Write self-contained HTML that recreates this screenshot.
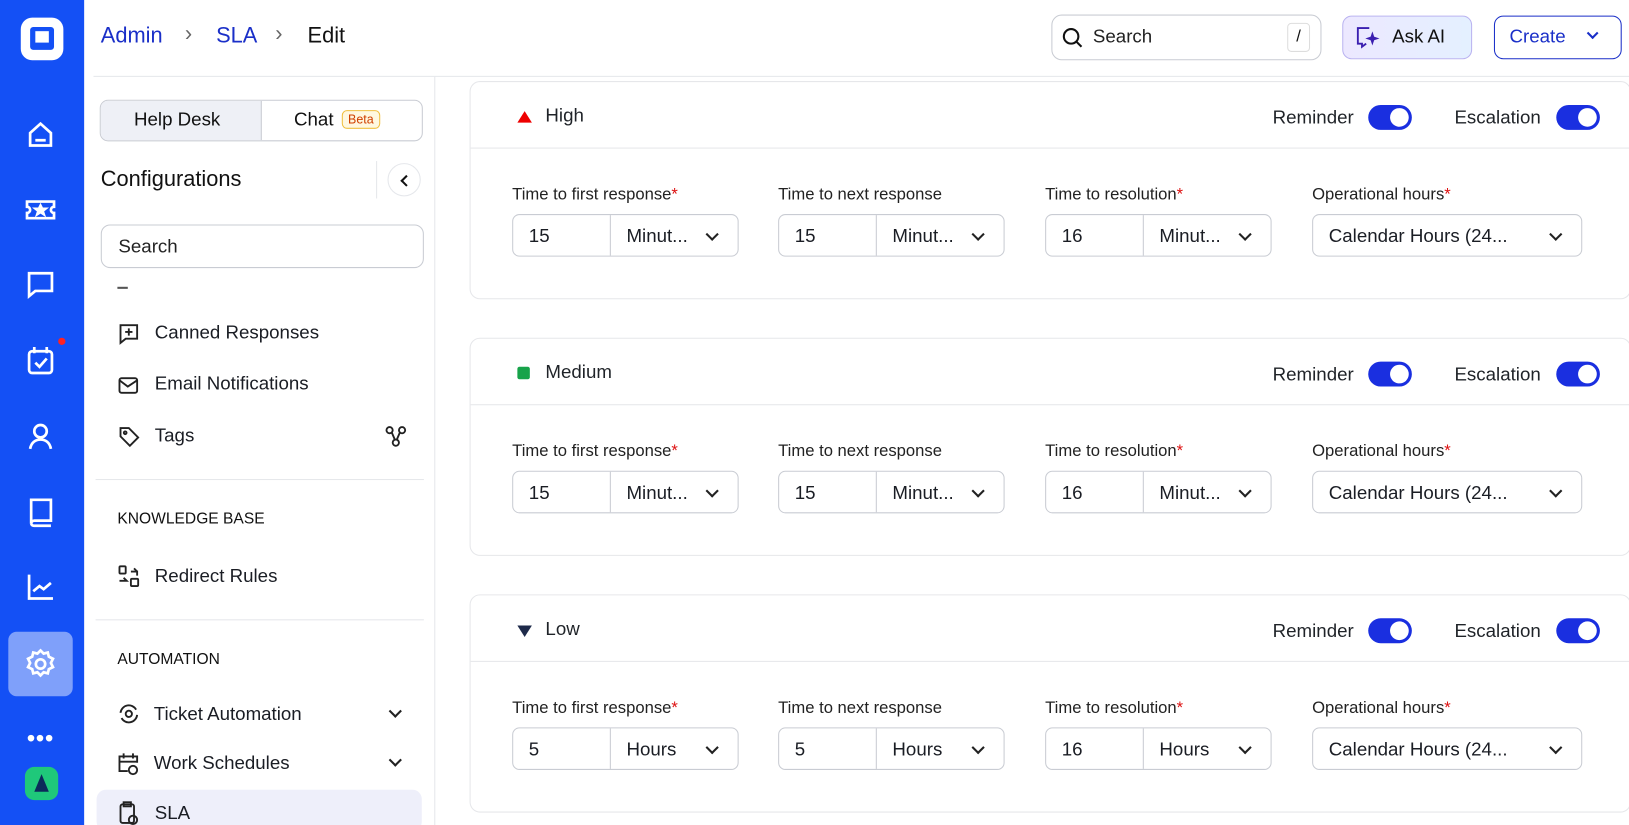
<!DOCTYPE html>
<html><head><meta charset="utf-8"><style>
*{box-sizing:border-box;margin:0;padding:0}
html,body{width:1629px;height:825px;overflow:hidden;background:#fff;font-family:"Liberation Sans",sans-serif;color:#111}
#w{width:1568px;height:794px;transform:scale(1.0389,1.0391);transform-origin:0 0;position:relative;background:#fff}
.a{position:absolute}
.rail{left:0;top:0;width:81px;height:794px;background:#1450f5}
.ic{position:absolute;left:22px;width:34px;height:34px}
.sep{background:#e5e7eb;height:1px}
.card{position:absolute;left:452px;width:1118px;height:210px;border:1px solid #e6e7ea;border-radius:10px;background:#fff}
.card .hd{height:64px;border-bottom:1px solid #e6e7ea;position:relative}
.t{font-size:18px;color:#1f2328}
.lbl{position:absolute;top:100px;font-size:16px;color:#222}
.lbl b{color:#d11;font-weight:normal}
.inp{position:absolute;top:127px;height:41px;border:1px solid #c9ccd3;border-radius:7px;font-size:18px;color:#1a1d24}
.inp .n{position:absolute;left:15px;top:10px}
.inp .d{position:absolute;left:93px;top:0;width:1px;height:39px;background:#c9ccd3}
.inp .u{position:absolute;left:109px;top:10px}
.inp .c{position:absolute;right:20px;top:7px}
.tg{position:absolute;width:42px;height:24px;border-radius:12px;background:#1a2fe0}
.tg:after{content:"";position:absolute;right:3px;top:3px;width:18px;height:18px;border-radius:50%;background:#fff}
.chev{display:inline-block;width:9px;height:9px;border-right:2px solid #222;border-bottom:2px solid #222;transform:rotate(45deg);margin-top:-5px}
.ch2{position:absolute;width:9px;height:9px;border-right:2px solid #222;border-bottom:2px solid #222;transform:rotate(45deg)}
.nav{position:absolute;left:148px;font-size:18px;color:#1a1d24}
</style></head><body><div id="w">
<div class="a rail"></div>
<div class="a" style="left:20px;top:17px;width:41px;height:41px;border-radius:11px;background:#fff"><div style="position:absolute;left:9px;top:9px;width:23px;height:22px;background:#1450f5;border-radius:3px"></div><div style="position:absolute;left:14px;top:13px;width:13px;height:11px;background:#fff"></div></div>
<svg class="ic" style="top:113px" viewBox="0 0 34 34" fill="none" stroke="#fff" stroke-width="2.6"><path d="M7 15 L17 6 L27 15 V27 H7 Z"/><path d="M12 22h10"/></svg>
<svg class="ic" style="top:185px" viewBox="0 0 34 34" fill="none" stroke="#fff" stroke-width="2.6"><path d="M4 9h26v5a3 3 0 0 0 0 6v5H4v-5a3 3 0 0 0 0-6z"/><path d="M17 13l1.5 3h3l-2.5 2 1 3-3-2-3 2 1-3-2.5-2h3z" fill="#fff"/></svg>
<svg class="ic" style="top:257px" viewBox="0 0 34 34" fill="none" stroke="#fff" stroke-width="2.6"><path d="M6 6h22v17H12l-6 5z"/></svg>
<svg class="ic" style="top:330px" viewBox="0 0 34 34" fill="none" stroke="#fff" stroke-width="2.6"><rect x="6" y="8" width="22" height="21" rx="3"/><path d="M11 4v6M23 4v6M12 19l4 4 7-8"/></svg>
<div class="a" style="left:54px;top:323px;width:11px;height:11px;border-radius:50%;background:#f22;border:2px solid #1450f5"></div>
<svg class="ic" style="top:403px" viewBox="0 0 34 34" fill="none" stroke="#fff" stroke-width="2.6"><circle cx="17" cy="12" r="6"/><path d="M7 29c1-6 5-9 10-9s9 3 10 9"/></svg>
<svg class="ic" style="top:476px" viewBox="0 0 34 34" fill="none" stroke="#fff" stroke-width="2.6"><path d="M8 5h19v20H11a3 3 0 0 0-3 3zM8 28a3 3 0 0 0 3 2h16"/></svg>
<svg class="ic" style="top:548px" viewBox="0 0 34 34" fill="none" stroke="#fff" stroke-width="2.6"><path d="M6 5v23h23M10 21l6-5 4 3 7-6"/></svg>
<div class="a" style="left:8px;top:608px;width:62px;height:62px;border-radius:8px;background:#7fa0fa"></div>
<svg class="ic" style="top:622px" viewBox="0 0 34 34" fill="none" stroke="#fff" stroke-width="2.6"><circle cx="17" cy="17" r="4.5"/><path d="M17 4l3 3 4-1 1 4 4 2-2 4 2 4-4 2-1 4-4-1-3 3-3-3-4 1-1-4-4-2 2-4-2-4 4-2 1-4 4 1z"/></svg>
<div class="a" style="left:26px;top:698px;color:#fff;font-size:22px;font-weight:bold;letter-spacing:1px">•••</div>
<div class="a" style="left:24px;top:738px;width:32px;height:32px;border-radius:9px;background:#1fc87a"><div style="position:absolute;left:9px;top:7px;width:0;height:0;border-left:7px solid transparent;border-right:7px solid transparent;border-bottom:17px solid #0c2a5a"></div></div>

<div class="a" style="left:97px;top:23px;font-size:21px;color:#1a2fc8">Admin</div>
<div class="a" style="left:178px;top:21px;font-size:21px;color:#666">›</div>
<div class="a" style="left:208px;top:23px;font-size:21px;color:#1a2fc8">SLA</div>
<div class="a" style="left:265px;top:21px;font-size:21px;color:#666">›</div>
<div class="a" style="left:296px;top:23px;font-size:21px;color:#111">Edit</div>
<div class="a" style="left:1012px;top:14px;width:260px;height:44px;border:1px solid #c9ccd3;border-radius:10px"></div>
<svg class="a" style="left:1020px;top:24px" width="24" height="24" viewBox="0 0 24 24" fill="none" stroke="#111" stroke-width="2"><circle cx="11" cy="11" r="7"/><path d="M16 16l5 5"/></svg>
<div class="a" style="left:1052px;top:25px;font-size:18px;color:#222">Search</div>
<div class="a" style="left:1239px;top:22px;width:22px;height:28px;border:1px solid #ddd;border-radius:4px;font-size:16px;text-align:center;line-height:26px">/</div>
<div class="a" style="left:1292px;top:15px;width:125px;height:42px;border:1px solid #b9b2f0;border-radius:9px;background:linear-gradient(90deg,#ece8ff,#e4f0ff)"></div>
<svg class="a" style="left:1304px;top:24px" width="24" height="24" viewBox="0 0 24 24" fill="none" stroke="#3b1fb0" stroke-width="1.8"><path d="M14 3H3v15h4v3l4-3"/><path d="M17 9l1 3 3 1-3 1-1 3-1-3-3-1 3-1z" fill="#3b1fb0"/></svg>
<div class="a" style="left:1340px;top:25px;font-size:18px;color:#111">Ask AI</div>
<div class="a" style="left:1438px;top:15px;width:123px;height:42px;border:1.5px solid #1a2fc8;border-radius:9px"></div>
<div class="a" style="left:1453px;top:25px;font-size:18px;color:#1a2fc8">Create</div>
<div class="ch2" style="left:1529px;top:28px;width:8px;height:8px;border-color:#1a2fc8"></div>
<div class="a sep" style="left:90px;top:73px;width:1478px"></div>
<div class="a" style="left:418px;top:74px;width:1px;height:720px;background:#e5e7eb"></div>

<div class="a" style="left:96px;top:96px;width:311px;height:40px;border:1px solid #c9ccd3;border-radius:8px;overflow:hidden"><div style="width:155px;height:100%;background:#eef0f6;border-right:1px solid #c9ccd3"></div></div>
<div class="a" style="left:129px;top:105px;font-size:18px">Help Desk</div>
<div class="a" style="left:283px;top:105px;font-size:18px">Chat</div>
<div class="a" style="left:329px;top:106px;padding:1px 5px;border:1px solid #f0c040;border-radius:5px;background:#fff8e0;color:#d04000;font-size:12px">Beta</div>
<div class="a" style="left:97px;top:161px;font-size:21px">Configurations</div>
<div class="a" style="left:362px;top:155px;width:1px;height:36px;background:#e5e7eb"></div>
<div class="a" style="left:373px;top:157px;width:32px;height:32px;border:1px solid #e5e7eb;border-radius:50%"><span class="a chev" style="left:13px;top:12px;transform:rotate(135deg);margin:0;border-width:2.5px;width:8px;height:8px;border-color:#111"></span></div>
<div class="a" style="left:97px;top:216px;width:311px;height:42px;border:1px solid #c9ccd3;border-radius:9px"></div>
<div class="a" style="left:114px;top:227px;font-size:18px;color:#222">Search</div>
<div class="a" style="left:113px;top:276px;width:10px;height:2px;background:#555"></div>
<svg class="a" style="left:113px;top:310px" width="22" height="22" viewBox="0 0 22 22" fill="none" stroke="#222" stroke-width="1.8"><path d="M3 3h16v13H8l-5 4z"/><path d="M11 6v7M7.5 9.5h7"/></svg>
<div class="nav" style="left:149px;top:310px">Canned Responses</div>
<svg class="a" style="left:113px;top:360px" width="22" height="22" viewBox="0 0 22 22" fill="none" stroke="#222" stroke-width="1.8"><rect x="2" y="4" width="17" height="14" rx="2"/><path d="M2 6l8 6 9-6"/></svg>
<div class="nav" style="left:149px;top:359px">Email Notifications</div>
<svg class="a" style="left:113px;top:409px" width="22" height="22" viewBox="0 0 22 22" fill="none" stroke="#222" stroke-width="1.8"><path d="M3 3h8l9 9-8 8-9-9z"/><circle cx="7.5" cy="7.5" r="1.3"/></svg>
<div class="nav" style="left:149px;top:409px">Tags</div>
<svg class="a" style="left:370px;top:409px" width="22" height="22" viewBox="0 0 22 22" fill="none" stroke="#222" stroke-width="1.8"><circle cx="5" cy="5" r="3"/><circle cx="17" cy="5" r="3"/><circle cx="11" cy="17" r="3"/><path d="M7 7l3 7M15 7l-3 7"/></svg>
<div class="a sep" style="left:92px;top:461px;width:316px"></div>
<div class="a" style="left:113px;top:491px;font-size:15px;color:#111">KNOWLEDGE BASE</div>
<svg class="a" style="left:113px;top:543px" width="22" height="24" viewBox="0 0 22 24" fill="none" stroke="#222" stroke-width="1.8"><rect x="2" y="2" width="6" height="7" rx="1"/><rect x="13" y="14" width="7" height="7" rx="1"/><path d="M13 7h6v4M16 4l3 3M2 16h7l-3-3"/></svg>
<div class="nav" style="left:149px;top:544px">Redirect Rules</div>
<div class="a sep" style="left:92px;top:596px;width:316px"></div>
<div class="a" style="left:113px;top:626px;font-size:15px;color:#111">AUTOMATION</div>
<svg class="a" style="left:113px;top:676px" width="22" height="22" viewBox="0 0 22 22" fill="none" stroke="#222" stroke-width="1.8"><path d="M3 10a8 8 0 0 1 15-3M19 12a8 8 0 0 1-15 3"/><circle cx="11" cy="11" r="3"/></svg>
<div class="nav" style="left:148px;top:677px">Ticket Automation</div>
<div class="ch2" style="left:376px;top:680px"></div>
<svg class="a" style="left:113px;top:723px" width="22" height="24" viewBox="0 0 22 24" fill="none" stroke="#222" stroke-width="1.8"><path d="M10 19H2V5h17v6M2 10h17M6 2v5M15 2v5"/><circle cx="15" cy="18" r="4"/></svg>
<div class="nav" style="left:148px;top:724px">Work Schedules</div>
<div class="ch2" style="left:376px;top:727px"></div>
<div class="a" style="left:93px;top:760px;width:313px;height:40px;border-radius:9px;background:#eeeffa"></div>
<svg class="a" style="left:113px;top:771px" width="22" height="24" viewBox="0 0 22 24" fill="none" stroke="#222" stroke-width="1.8"><rect x="3" y="3" width="13" height="18" rx="2"/><rect x="6" y="1" width="7" height="4"/><circle cx="15" cy="18" r="4"/></svg>
<div class="nav" style="left:149px;top:772px">SLA</div>

<!-- cards -->
<div class="card" style="top:78px"><div class="hd">
<div class="a" style="left:45px;top:28px;width:0;height:0;border-left:7px solid transparent;border-right:7px solid transparent;border-bottom:11px solid #e00"></div>
<div class="a t" style="left:72px;top:22px">High</div>
<div class="a t" style="left:772px;top:24px">Reminder</div><div class="tg" style="left:864px;top:22px"></div>
<div class="a t" style="left:947px;top:24px">Escalation</div><div class="tg" style="left:1045px;top:22px"></div></div>
<div class="lbl" style="left:40px">Time to first response<b>*</b></div>
<div class="lbl" style="left:296px">Time to next response</div>
<div class="lbl" style="left:553px">Time to resolution<b>*</b></div>
<div class="lbl" style="left:810px">Operational hours<b>*</b></div>
<div class="inp" style="left:40px;width:218px"><span class="n">15</span><span class="d"></span><span class="u">Minut...</span><span class="c"><span class="chev"></span></span></div>
<div class="inp" style="left:296px;width:218px"><span class="n">15</span><span class="d"></span><span class="u">Minut...</span><span class="c"><span class="chev"></span></span></div>
<div class="inp" style="left:553px;width:218px"><span class="n">16</span><span class="d"></span><span class="u">Minut...</span><span class="c"><span class="chev"></span></span></div>
<div class="inp" style="left:810px;width:260px"><span class="n">Calendar Hours (24...</span><span class="c"><span class="chev"></span></span></div>
</div>
<div class="card" style="top:325px"><div class="hd">
<div class="a" style="left:45px;top:27px;width:12px;height:12px;border-radius:2px;background:#17a34a"></div>
<div class="a t" style="left:72px;top:22px">Medium</div>
<div class="a t" style="left:772px;top:24px">Reminder</div><div class="tg" style="left:864px;top:22px"></div>
<div class="a t" style="left:947px;top:24px">Escalation</div><div class="tg" style="left:1045px;top:22px"></div></div>
<div class="lbl" style="left:40px">Time to first response<b>*</b></div>
<div class="lbl" style="left:296px">Time to next response</div>
<div class="lbl" style="left:553px">Time to resolution<b>*</b></div>
<div class="lbl" style="left:810px">Operational hours<b>*</b></div>
<div class="inp" style="left:40px;width:218px"><span class="n">15</span><span class="d"></span><span class="u">Minut...</span><span class="c"><span class="chev"></span></span></div>
<div class="inp" style="left:296px;width:218px"><span class="n">15</span><span class="d"></span><span class="u">Minut...</span><span class="c"><span class="chev"></span></span></div>
<div class="inp" style="left:553px;width:218px"><span class="n">16</span><span class="d"></span><span class="u">Minut...</span><span class="c"><span class="chev"></span></span></div>
<div class="inp" style="left:810px;width:260px"><span class="n">Calendar Hours (24...</span><span class="c"><span class="chev"></span></span></div>
</div>
<div class="card" style="top:572px"><div class="hd">
<div class="a" style="left:45px;top:29px;width:0;height:0;border-left:7px solid transparent;border-right:7px solid transparent;border-top:11px solid #1e2a4a"></div>
<div class="a t" style="left:72px;top:22px">Low</div>
<div class="a t" style="left:772px;top:24px">Reminder</div><div class="tg" style="left:864px;top:22px"></div>
<div class="a t" style="left:947px;top:24px">Escalation</div><div class="tg" style="left:1045px;top:22px"></div></div>
<div class="lbl" style="left:40px">Time to first response<b>*</b></div>
<div class="lbl" style="left:296px">Time to next response</div>
<div class="lbl" style="left:553px">Time to resolution<b>*</b></div>
<div class="lbl" style="left:810px">Operational hours<b>*</b></div>
<div class="inp" style="left:40px;width:218px"><span class="n">5</span><span class="d"></span><span class="u">Hours</span><span class="c"><span class="chev"></span></span></div>
<div class="inp" style="left:296px;width:218px"><span class="n">5</span><span class="d"></span><span class="u">Hours</span><span class="c"><span class="chev"></span></span></div>
<div class="inp" style="left:553px;width:218px"><span class="n">16</span><span class="d"></span><span class="u">Hours</span><span class="c"><span class="chev"></span></span></div>
<div class="inp" style="left:810px;width:260px"><span class="n">Calendar Hours (24...</span><span class="c"><span class="chev"></span></span></div>
</div>
</div>
</body></html>
